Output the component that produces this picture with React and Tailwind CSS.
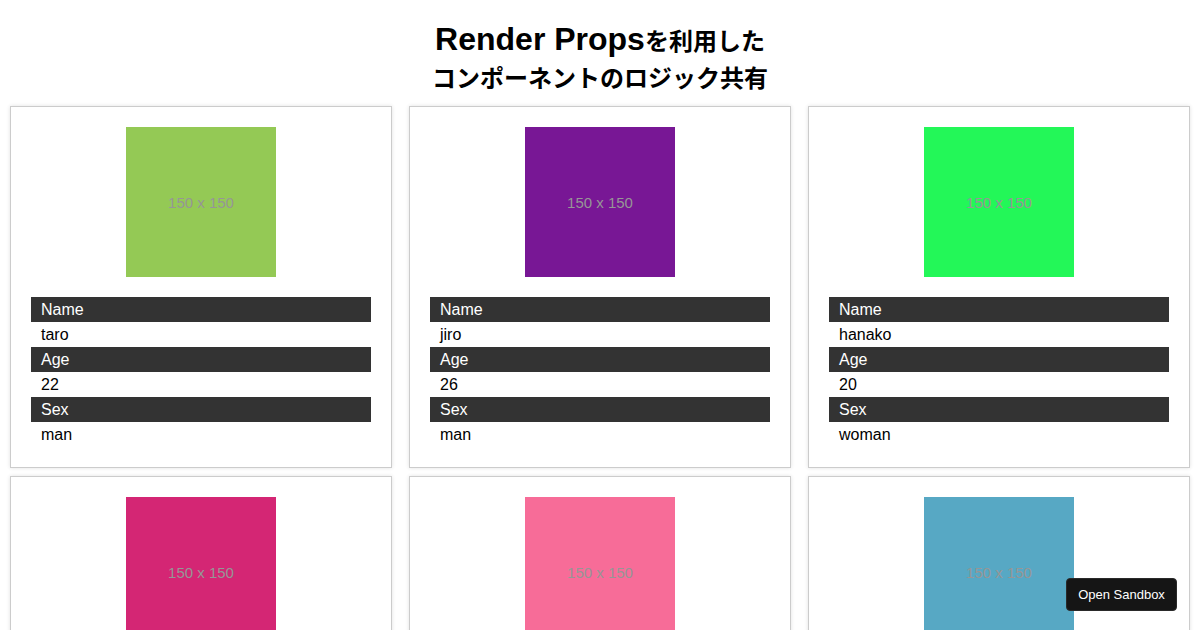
const people = [
    {name: "taro", age: 22, sex: "man", color: "bg-[#94c955]"},
    {name: "jiro", age: 26, sex: "man", color: "bg-[#781795]"},
    {name: "hanako", age: 20, sex: "woman", color: "bg-[#23f758]"},
    {name: "saburo", age: 31, sex: "man", color: "bg-[#d42674]"},
    {name: "yoko", age: 24, sex: "woman", color: "bg-[#f76c98]"},
    {name: "shiro", age: 28, sex: "man", color: "bg-[#57a8c4]"},
];

const cjk = "text-[24px] font-['Noto_Sans_CJK_JP',sans-serif]";

const Row = ({label, value}) => (
    <>
        <div className="bg-[#333333] text-white h-[25px] leading-[25px] pl-[10px]">{label}</div>
        <div className="text-black h-[25px] leading-[25px] pl-[10px]">{value}</div>
    </>
);

const Card = ({person}) => (
    <div className="bg-white border border-[#cccccc] shadow-[0_0_4px_rgba(0,0,0,0.12)] p-5">
        <div className={`w-[150px] h-[150px] mx-auto flex items-center justify-center pt-[3px] ${person.color}`}>
            <span className="text-[15px] text-[#969696]">150 x 150</span>
        </div>
        <div className="mt-5 text-[16px]">
            <Row label="Name" value={person.name}/>
            <Row label="Age" value={person.age}/>
            <Row label="Sex" value={person.sex}/>
        </div>
    </div>
);

const App = () => {
    return (
        <div className="bg-white h-screen overflow-hidden font-['Liberation_Sans',Arial,sans-serif]">
            <h1 className="text-center text-[32px] font-bold leading-[37px] text-black pt-[21px] mb-[11px]">
                Render Props<span className={cjk}>を利用した</span>
                <br/>
                <span className={cjk}>コンポーネントのロジック共有</span>
            </h1>

            <div className="grid grid-cols-3 gap-x-[17px] gap-y-[8px] px-[10px]">
                {people.map((p) => (
                    <Card key={p.name} person={p}/>
                ))}
            </div>

            <button
                className="fixed right-[23px] bottom-[19px] w-[111px] h-[33px] rounded-[4px] bg-[#151515] text-white text-[13px] border border-[#2a2a2a]">
                Open Sandbox
            </button>
        </div>
    );
};

export default App;
